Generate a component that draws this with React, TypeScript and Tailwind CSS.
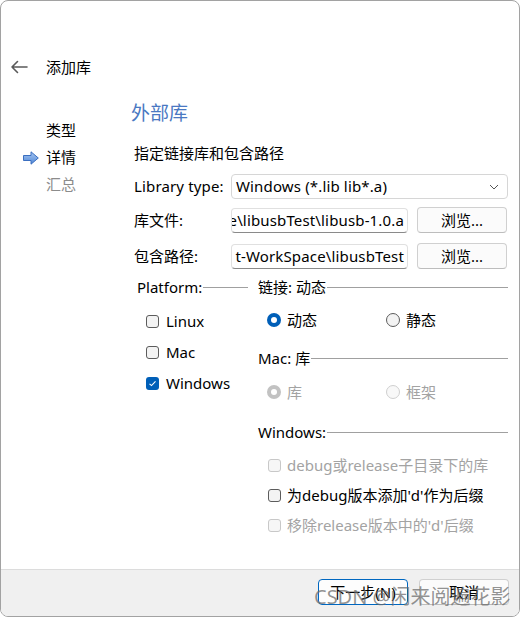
import React from "react";

const FONT = '"Noto Sans", "Noto Sans CJK SC", sans-serif';

function BackArrow() {
  return (
    <svg width="18" height="14" viewBox="0 0 18 14" className="block">
      <path d="M17 7H2M7.5 1.5L2 7l5.5 5.5" fill="none" stroke="#5a5a5a" strokeWidth="1.6" strokeLinecap="round" strokeLinejoin="round" />
    </svg>
  );
}

function NavArrow() {
  return (
    <svg width="16" height="14" viewBox="0 0 16 14" className="block">
      <defs>
        <linearGradient id="navg" x1="0" y1="0" x2="0" y2="1">
          <stop offset="0" stopColor="#a9c8f2" />
          <stop offset="1" stopColor="#4f86d6" />
        </linearGradient>
      </defs>
      <path d="M0.5 4.5H8V0.8L15.3 7 8 13.2V9.5H0.5Z" fill="url(#navg)" stroke="#3b6fc0" strokeWidth="1" strokeLinejoin="round" />
    </svg>
  );
}

function Chevron() {
  return (
    <svg width="10" height="6" viewBox="0 0 10 6" className="block">
      <path d="M1 1l4 4 4-4" fill="none" stroke="#555" strokeWidth="1" />
    </svg>
  );
}

function Checkbox({ checked = false, disabled = false }: { checked?: boolean; disabled?: boolean }) {
  if (checked) {
    return (
      <span className="w-[13px] h-[13px] rounded-[3px] bg-[#005fb8] flex items-center justify-center shrink-0">
        <svg width="9" height="7" viewBox="0 0 9 7">
          <path d="M1.5 3.8l2 1.8 4-4.2" fill="none" stroke="#fff" strokeWidth="1.1" />
        </svg>
      </span>
    );
  }
  return (
    <span
      className={
        disabled
          ? "w-[13px] h-[13px] rounded-[3px] border border-[#c8c8c8] bg-[#f6f6f6] shrink-0"
          : "w-[13px] h-[13px] rounded-[3px] border border-[#5c5c5c] bg-[#f3f3f3] shrink-0"
      }
    />
  );
}

function Radio({ checked = false, disabled = false }: { checked?: boolean; disabled?: boolean }) {
  if (checked) {
    return (
      <span
        className={
          disabled
            ? "w-[14px] h-[14px] rounded-full bg-[#c2c2c2] flex items-center justify-center shrink-0"
            : "w-[14px] h-[14px] rounded-full bg-[#005fb8] flex items-center justify-center shrink-0"
        }
      >
        <span className="w-[6px] h-[6px] rounded-full bg-white" />
      </span>
    );
  }
  return (
    <span
      className={
        disabled
          ? "w-[14px] h-[14px] rounded-full border border-[#cfcfcf] bg-[#f8f8f8] shrink-0"
          : "w-[14px] h-[14px] rounded-full border border-[#5c5c5c] bg-[#f3f3f3] shrink-0"
      }
    />
  );
}

function GroupTitle({ label, width }: { label: string; width: string }) {
  return (
    <div className={`flex items-center h-[20px] ${width}`}>
      <span className="whitespace-nowrap">{label}</span>
      <span className="flex-1 h-px bg-[#a0a0a0] ml-[1px]" />
    </div>
  );
}

function Button({ label, primary = false }: { label: string; primary?: boolean }) {
  return (
    <div
      className={
        primary
          ? "w-[90px] h-[26px] rounded-[4px] border border-[#0067c0] bg-[#fdfdfd] flex items-center justify-center text-[15px]"
          : "w-[90px] h-[26px] rounded-[4px] border border-[#d0d0d0] border-b-[#bdbdbd] bg-[#fbfbfb] flex items-center justify-center text-[15px]"
      }
    >
      {label}
    </div>
  );
}

function PathInput({ value }: { value: string }) {
  return (
    <div className="w-[177px] h-[25px] rounded-[4px] border border-[#e0e0e0] border-b-[#8a8a8a] bg-white flex items-center justify-end overflow-hidden whitespace-nowrap pr-[3px] text-[15px] tracking-[0.15px]">
      <span>{value}</span>
    </div>
  );
}

export default function App() {
  return (
    <div className="w-[521px] h-[617px] bg-white text-black" style={{ fontFamily: FONT }}>
      <div className="relative w-[520px] h-[617px] border border-[#a2a2a2] rounded-[8px] flex flex-col overflow-hidden bg-white text-[15px] leading-none">
        <div className="flex-1 flex flex-col">
          {/* header */}
          <div className="flex items-center h-[24px] mt-[54px]">
            <div className="ml-[9px] w-[36px]">
              <BackArrow />
            </div>
            <span className="text-[15px]">添加库</span>
          </div>

          <div className="flex">
            {/* wizard steps */}
            <div className="w-[130px] pt-[38px] flex flex-col">
              <div className="h-[27px] flex items-center pl-[45px]">类型</div>
              <div className="h-[27px] flex items-center">
                <span className="ml-[22px] w-[23px]">
                  <NavArrow />
                </span>
                <span>详情</span>
              </div>
              <div className="h-[27px] flex items-center pl-[45px] text-[#8c8c8c]">汇总</div>
            </div>

            {/* page */}
            <div className="flex-1 flex flex-col">
              <div className="h-[28px] mt-[20px] flex items-center text-[19px] text-[#4a78c2]">外部库</div>
              <div className="h-[22px] mt-[15px] flex items-center pl-[3px]">指定链接库和包含路径</div>

              <div className="h-[25px] mt-[10px] flex items-center pl-[3px] tracking-[0.15px]">
                <span className="w-[97px]">Library type:</span>
                <div className="w-[277px] h-[25px] rounded-[4px] border border-[#d6d6d6] bg-white flex items-center pl-[4px] pr-[8px]">
                  <span className="flex-1">Windows (*.lib lib*.a)</span>
                  <Chevron />
                </div>
              </div>

              <div className="h-[26px] mt-[8px] flex items-center pl-[3px]">
                <span className="w-[97px]">库文件:</span>
                <PathInput value="e\libusbTest\libusb-1.0.a" />
                <div className="ml-[9px]">
                  <Button label="浏览..." />
                </div>
              </div>

              <div className="h-[26px] mt-[10px] flex items-center pl-[3px]">
                <span className="w-[97px]">包含路径:</span>
                <PathInput value="t-WorkSpace\libusbTest" />
                <div className="ml-[9px]">
                  <Button label="浏览..." />
                </div>
              </div>

              {/* options */}
              <div className="flex mt-[8px]">
                <div className="w-[127px] pl-[6px] flex flex-col">
                  <GroupTitle label="Platform:" width="w-[111px]" />
                  <div className="flex flex-col mt-[9px] pl-[9px]">
                    <div className="h-[31px] flex items-center gap-[7px]">
                      <Checkbox />
                      <span>Linux</span>
                    </div>
                    <div className="h-[31px] flex items-center gap-[7px]">
                      <Checkbox />
                      <span>Mac</span>
                    </div>
                    <div className="h-[31px] flex items-center gap-[7px]">
                      <Checkbox checked />
                      <span>Windows</span>
                    </div>
                  </div>
                </div>

                <div className="w-[250px] flex flex-col">
                  <GroupTitle label="链接: 动态" width="w-[250px]" />
                  <div className="h-[24px] mt-[11px] flex items-center pl-[9px]">
                    <div className="w-[119px] flex items-center gap-[6px]">
                      <Radio checked />
                      <span>动态</span>
                    </div>
                    <div className="flex items-center gap-[6px]">
                      <Radio />
                      <span>静态</span>
                    </div>
                  </div>

                  <div className="mt-[16px]">
                    <GroupTitle label="Mac: 库" width="w-[250px]" />
                  </div>
                  <div className="h-[24px] mt-[12px] flex items-center pl-[9px] text-[#a3a3a3]">
                    <div className="w-[119px] flex items-center gap-[6px]">
                      <Radio checked disabled />
                      <span>库</span>
                    </div>
                    <div className="flex items-center gap-[6px]">
                      <Radio disabled />
                      <span>框架</span>
                    </div>
                  </div>

                  <div className="mt-[18px]">
                    <GroupTitle label="Windows:" width="w-[250px]" />
                  </div>
                  <div className="flex flex-col mt-[8px] pl-[10px]">
                    <div className="h-[30px] flex items-center gap-[6px] text-[#a3a3a3]">
                      <Checkbox disabled />
                      <span>debug或release子目录下的库</span>
                    </div>
                    <div className="h-[30px] flex items-center gap-[6px]">
                      <Checkbox />
                      <span>为debug版本添加'd'作为后缀</span>
                    </div>
                    <div className="h-[30px] flex items-center gap-[6px] text-[#a3a3a3]">
                      <Checkbox disabled />
                      <span>移除release版本中的'd'后缀</span>
                    </div>
                  </div>
                </div>
              </div>
            </div>
          </div>
        </div>

        {/* footer */}
        <div className="h-[47px] border-t border-[#dcdcdc] bg-[#f0f0f0] flex justify-end gap-[11px] pt-[9px] pr-[10px]">
          <Button label="下一步(N)" primary />
          <Button label="取消" />
        </div>

        <div className="absolute left-[313px] top-[584px] text-[20px] leading-[24px] text-[rgba(105,105,105,0.72)] whitespace-nowrap">
          CSDN @闲来阅遍花影
        </div>
      </div>
    </div>
  );
}
